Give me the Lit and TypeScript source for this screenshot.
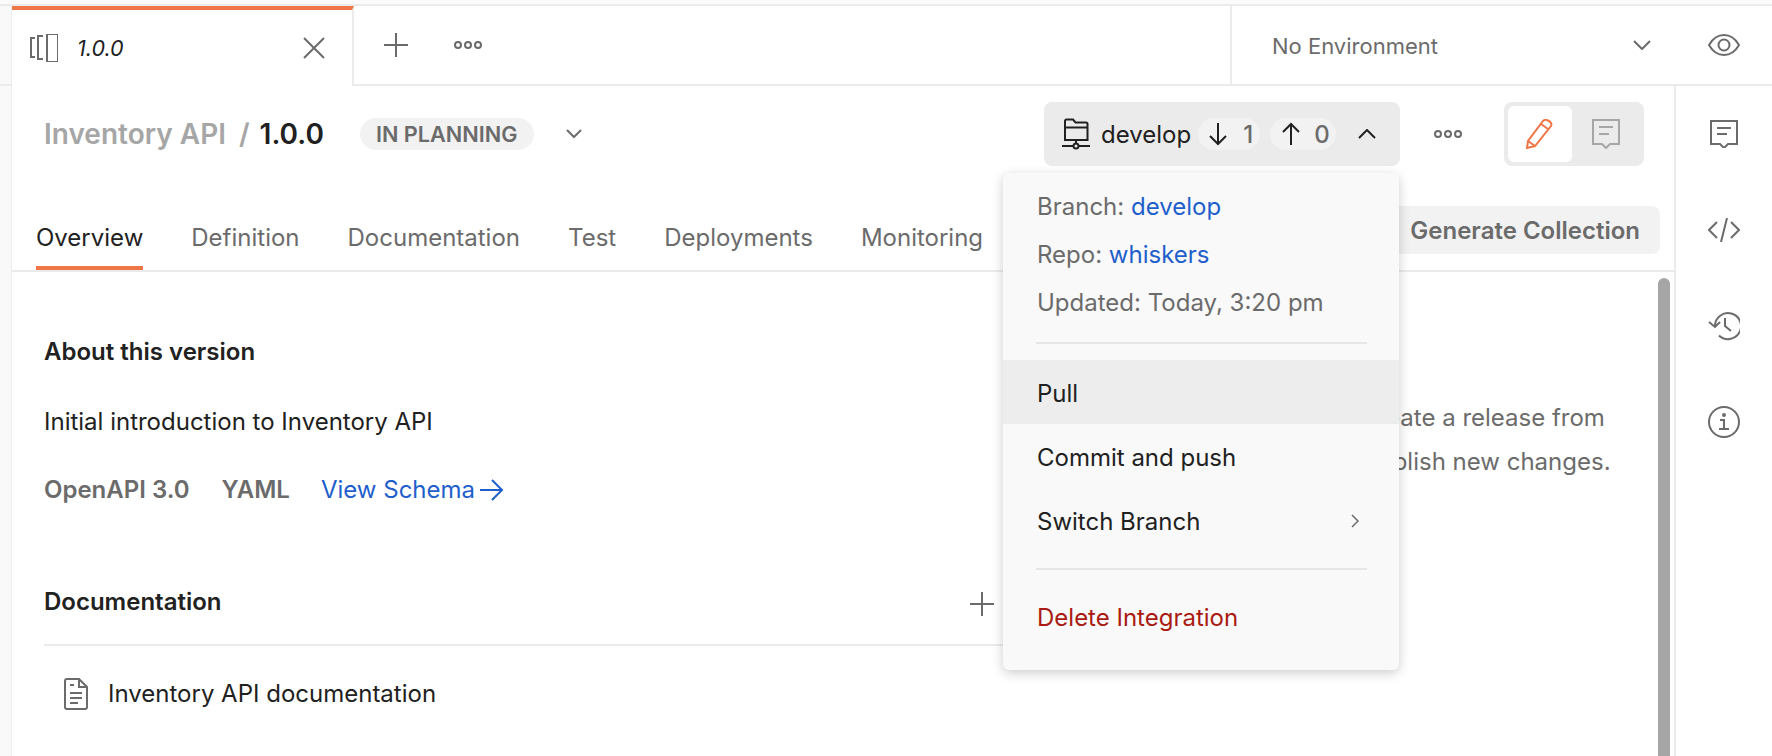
import { LitElement, html, css, svg } from "lit";
import { customElement } from "lit/decorators.js";

const icon = (w: number, h: number, body: unknown, cls = "") => html`<svg class="ic ${cls}" width=${w} height=${h} viewBox="0 0 ${w} ${h}" fill="none" stroke="currentColor" stroke-width="2">${body}</svg>`;

const dots = icon(28, 10, svg`<circle cx="4" cy="5" r="3"/><circle cx="14" cy="5" r="3"/><circle cx="24" cy="5" r="3"/>`);
const plus = (s: number) => icon(s, s, svg`<path d="M${s / 2} 0V${s}M0 ${s / 2}H${s}"/>`);

@customElement("app-root")
export class AppRoot extends LitElement {
  static styles = css`
    :host { display: block; width: 1772px; height: 756px; overflow: hidden; background: #fff; font-family: Inter, "Noto Sans", sans-serif; font-size: 24px; color: #212121; }
    * { box-sizing: border-box; }
    .ic { display: block; flex: none; }
    .page { height: 756px; display: flex; flex-direction: column; }
    .topline { height: 6px; flex: none; background: #fbfbfb; border-bottom: 2px solid #ebebeb; }
    .tabbar { height: 80px; flex: none; display: flex; align-items: center; border-bottom: 2px solid #ebebeb; color: #6b6b6b; }
    .gutter { width: 12px; flex: none; align-self: stretch; background: #f9f9f9; border-right: 1px solid #ededed; }
    .tab { width: 342px; height: 80px; align-self: flex-start; flex: none; background: #fff; border-top: 4px solid #ef7646; border-right: 2px solid #ebebeb; display: flex; align-items: center; padding: 0 27px 0 18px; }
    .tab i { margin-left: 19px; color: #212121; font-size: 21.5px; }
    .tab .x { margin-left: auto; }
    .add { margin-left: 30px; }
    .more { margin-left: 46px; }
    .env { margin-left: auto; width: 542px; align-self: stretch; border-left: 2px solid #ebebeb; display: flex; align-items: center; padding-left: 40px; font-size: 22px; }
    .env .label { padding-top: 2px; }
    .env .chev { margin-left: auto; margin-right: 57px; }
    .env .eye { margin-right: 32px; }
    .body { flex: 1; min-height: 0; display: flex; }
    .main { width: 1662px; flex: none; position: relative; display: flex; flex-direction: column; }
    .side { flex: 1; border-left: 2px solid #ebebeb; color: #6b6b6b; }
    .side div { height: 96px; display: flex; align-items: center; justify-content: center; }
    .head { height: 80px; flex: none; padding: 16px 30px 0 32px; display: flex; align-items: center; }
    .crumb { font-size: 28px; font-weight: 600; color: #a6a6a6; white-space: nowrap; }
    .crumb .sl { margin: 0 10px 0 13px; }
    .crumb b { font-weight: 600; color: #212121; }
    .status { margin-left: 36px; height: 32px; padding: 0 16px; border-radius: 16px; background: #f2f2f2; color: #6b6b6b; font-size: 21.7px; font-weight: 600; display: flex; align-items: center; white-space: nowrap; }
    .head .chev { margin-left: 32px; color: #6b6b6b; }
    .anchor { margin-left: auto; position: relative; }
    .branch { width: 356px; height: 64px; border-radius: 8px; background: #ebebeb; display: flex; align-items: center; padding-left: 18px; }
    .branch .name { margin-left: 11px; }
    .count { height: 32px; border-radius: 16px; background: #f2f2f2; display: flex; align-items: center; color: #212121; flex: none; }
    .count span { color: #6b6b6b; font-weight: 500; }
    .c1 { margin-left: 7px; width: 62px; padding-left: 11px; gap: 16px; }
    .c2 { margin-left: 10px; width: 66px; padding-left: 12px; gap: 14px; }
    .branch .up { margin-left: 22px; }
    .menu { position: absolute; z-index: 5; left: -41px; top: 71px; width: 396px; height: 497px; background: #f9f9f9; border-radius: 6px; box-shadow: 0 3px 12px rgba(0, 0, 0, 0.2); padding-top: 9px; }
    .info { height: 48px; padding-left: 34px; display: flex; align-items: center; color: #6b6b6b; white-space: pre; }
    .info a { color: #1f5fcc; }
    .rule { height: 2px; margin: 16px 32px 16px 33px; background: #e6e6e6; }
    .item { height: 64px; padding: 2px 40px 0 34px; display: flex; align-items: center; justify-content: space-between; }
    .item svg { color: #6b6b6b; }
    .item.on { background: #ededed; }
    .rule.two { margin: 16px 32px 14px 33px; }
    .del { color: #a91b12; }
    .moreh { margin-left: 34px; color: #6b6b6b; }
    .toggle { margin-left: 42px; width: 140px; height: 64px; border-radius: 8px; background: #ebebeb; padding: 4px; display: flex; align-items: center; color: #a6a6a6; }
    .toggle .on { width: 64px; height: 56px; border-radius: 6px; background: #fff; display: flex; align-items: center; justify-content: center; color: #ef7646; }
    .toggle .off { margin-left: 20px; }
    .tabs { height: 106px; flex: none; border-bottom: 2px solid #ebebeb; padding: 0 14px 0 24px; display: flex; position: relative; }
    .t { align-self: flex-end; height: 64px; padding-top: 16px; margin-right: 48px; line-height: 32px; color: #6b6b6b; white-space: nowrap; }
    .t.on { color: #212121; border-bottom: 4px solid #ef7646; }
    .gen { margin-left: auto; margin-top: 40px; height: 48px; padding: 0 20px; border-radius: 8px; background: #f2f2f2; color: #6b6b6b; font-weight: 600; display: flex; align-items: center; white-space: nowrap; }
    .content { flex: 1; min-height: 0; display: flex; position: relative; }
    .left { width: 998px; flex: none; padding-left: 32px; }
    .left .row { line-height: 32px; }
    .h { font-weight: 600; }
    .about { margin-top: 64px; }
    .desc { margin-top: 38px; }
    .meta { margin-top: 36px; display: flex; align-items: center; color: #6b6b6b; font-weight: 600; }
    .meta .yaml { margin-left: 32px; }
    .meta a { margin-left: 31px; color: #1f5fcc; font-weight: 400; }
    .meta svg { margin-left: 5px; color: #1f5fcc; }
    .dochead { margin-top: 80px; border-bottom: 2px solid #ebebeb; display: flex; justify-content: space-between; height: 60px; }
    .dochead svg { margin-top: 6px; color: #6b6b6b; margin-right: 16px; }
    .doc { margin-top: 32px; display: flex; align-items: center; padding-left: 20px; }
    .doc svg { color: #6b6b6b; margin-right: 20px; }
    .right { margin-top: 124px; margin-left: 325px; color: #6b6b6b; line-height: 44px; white-space: nowrap; }
    .bar { position: absolute; left: 1646px; top: 6px; bottom: 0; width: 12px; border-radius: 6px 6px 0 0; background: #a6a6a6; }
  `;

  render() {
    const chevDown = icon(18, 10, svg`<path d="M1 1l8 8 8-8"/>`, "chev");
    return html`
      <div class="page">
        <div class="topline"></div>
        <div class="tabbar">
          <div class="gutter"></div>
          <div class="tab">
            ${icon(28, 28, svg`<path d="M5 4H1v19h4M13 2H8v23h5"/><rect x="17" y="0" width="11" height="28" stroke-width="2"/>`)}
            <i>1.0.0</i>
            <span class="x">${icon(22, 22, svg`<path d="M1 1l20 20M21 1L1 21"/>`)}</span>
          </div>
          <span class="add">${plus(24)}</span>
          <span class="more">${dots}</span>
          <div class="env">
            <span class="label">No Environment</span>
            ${chevDown}
            <span class="eye">${icon(32, 22, svg`<path d="M1 11C5 4 10 1 16 1s11 3 15 10c-4 7-9 10-15 10S5 18 1 11z"/><circle cx="16" cy="11" r="5.5"/>`)}</span>
          </div>
        </div>
        <div class="body">
          <div class="gutter"></div>
          <div class="main">
            <div class="head">
              <span class="crumb">Inventory API<span class="sl">/</span><b>1.0.0</b></span>
              <span class="status">IN PLANNING</span>
              ${icon(16, 10, svg`<path d="M1 1l7 7 7-7"/>`, "chev")}
              <div class="anchor">
                <div class="branch">
                  ${icon(28, 32, svg`<path d="M3 22V3a1.5 1.5 0 0 1 1.5-1.5H11l2.5 3H24a1.5 1.5 0 0 1 1.5 1.5v16zM3 9.5h22.500M14 22v6M0 28h28"/><circle cx="14" cy="28" r="2.500" fill="#ebebeb"/>`)}
                  <span class="name">develop</span>
                  <span class="count c1">${icon(18, 24, svg`<path d="M9 1v21M1 14l8 8 8-8"/>`)}<span>1</span></span>
                  <span class="count c2">${icon(18, 24, svg`<path d="M9 23V2M1 10l8-8 8 8"/>`)}<span>0</span></span>
                  ${icon(18, 10, svg`<path d="M1 9l8-8 8 8"/>`, "up")}
                </div>
                <div class="menu">
                  <div class="info">Branch: <a>develop</a></div>
                  <div class="info">Repo: <a>whiskers</a></div>
                  <div class="info">Updated: Today, 3:20 pm</div>
                  <div class="rule"></div>
                  <div class="item on">Pull</div>
                  <div class="item">Commit and push</div>
                  <div class="item">Switch Branch ${icon(8, 14, svg`<path d="M1 1l6 6-6 6" stroke-width="1.500"/>`)}</div>
                  <div class="rule two"></div>
                  <div class="item del">Delete Integration</div>
                </div>
              </div>
              <span class="moreh">${dots}</span>
              <div class="toggle">
                <div class="on">${icon(28, 30, svg`<path d="M1 29l1-7L17 2c1.500-1.500 3-1.500 5-.5 3 1.500 4 3.500 3 5.500L9 27zM2 22l7 5M15 5l7 5"/>`)}</div>
                <span class="off">${icon(28, 30, svg`<path d="M1 1h26v24H18l-4 4-4-4H1zM7 8h14M7 15h10"/>`)}</span>
              </div>
            </div>
            <div class="tabs">
              <span class="t on">Overview</span>
              <span class="t">Definition</span>
              <span class="t">Documentation</span>
              <span class="t">Test</span>
              <span class="t">Deployments</span>
              <span class="t">Monitoring</span>
              <span class="gen">Generate Collection</span>
            </div>
            <div class="content">
              <div class="left">
                <div class="row h about">About this version</div>
                <div class="row desc">Initial introduction to Inventory API</div>
                <div class="row meta"><span>OpenAPI 3.0</span><span class="yaml">YAML</span><a>View Schema</a>${icon(24, 24, svg`<path d="M0 12h22M12 2l10 10-10 10"/>`)}</div>
                <div class="row h dochead"><span>Documentation</span>${plus(24)}</div>
                <div class="row doc">${icon(24, 32, svg`<path d="M1 3a2 2 0 0 1 2-2h12l8 8v20a2 2 0 0 1-2 2H3a2 2 0 0 1-2-2zM15 1v8h8M6 7h4M6 15h12M6 20h12M6 25h8"/>`)}Inventory API documentation</div>
              </div>
              <div class="right">
                <div>to create a release from</div>
                <div>to publish new changes.</div>
              </div>
              <div class="bar"></div>
            </div>
          </div>
          <div class="side">
            <div>${icon(28, 28, svg`<path d="M1 1h26v23H18l-4 4-4-4H1zM7 8h14M7 14h10"/>`)}</div>
            <div>${icon(32, 24, svg`<path d="M9 4l-8 8 8 8M23 4l8 8-8 8M19 0l-6 24"/>`)}</div>
            <div>${icon(32, 30, svg`<path d="M7 15a13 13 0 1 1 4 9.500M1 11l6 5 5-5M17 7v8l6 5"/>`)}</div>
            <div>${icon(32, 32, svg`<circle cx="16" cy="16" r="15"/><circle cx="16" cy="9" r="1" fill="currentColor"/><path d="M12 14h4v9M11 23h10"/>`)}</div>
          </div>
        </div>
      </div>
    `;
  }
}
